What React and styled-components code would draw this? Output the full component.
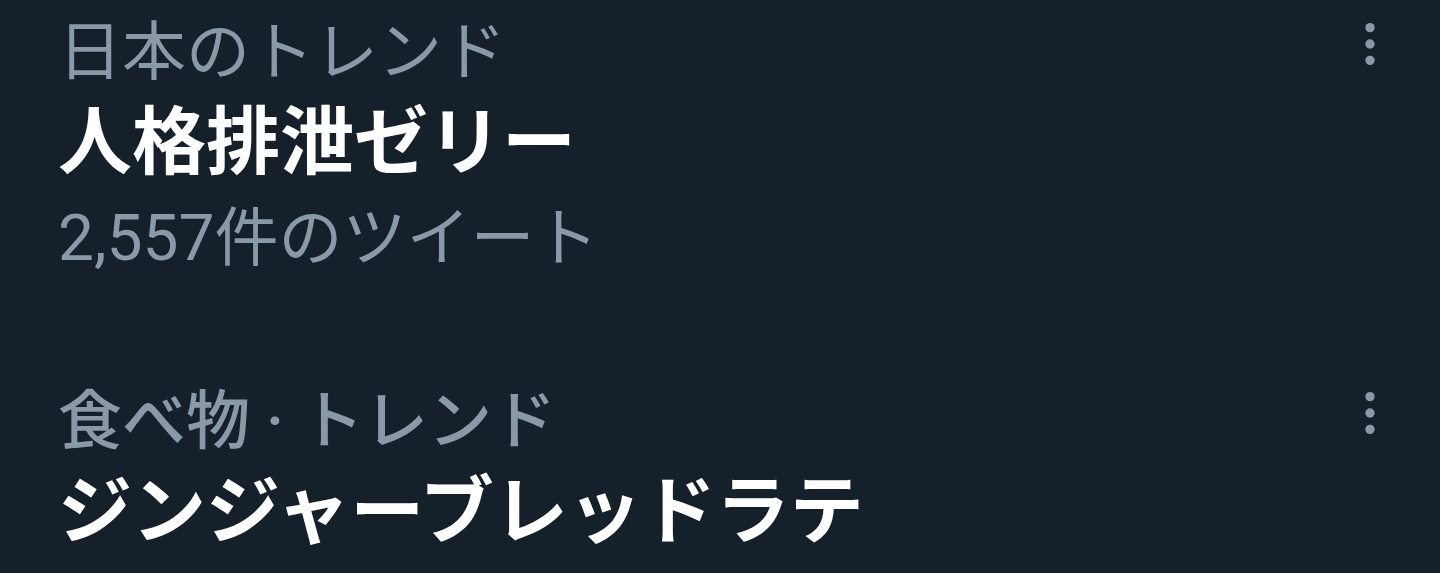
import React from 'react';
import styled, { createGlobalStyle } from 'styled-components';

const GlobalStyle = createGlobalStyle`
  html, body {
    margin: 0;
    padding: 0;
    background: #15202b;
  }
  body {
    font-family: Roboto, "Noto Sans CJK JP", sans-serif;
    -webkit-font-smoothing: antialiased;
  }
`;

const TrendList = styled.section`
  display: flex;
  flex-direction: column;
  gap: 87px;
  padding: 1px 42px 0 58px;
  height: 573px;
  box-sizing: border-box;
  overflow: hidden;
  background: #15202b;
`;

const TrendItem = styled.article`
  display: flex;
  flex-direction: column;
`;

const Category = styled.div`
  display: flex;
  align-items: center;
  justify-content: space-between;
  height: 90px;
  font-size: 64px;
  font-weight: ${(p) => (p.$topical ? 500 : 400)};
  color: #8b98a5;
  white-space: nowrap;
`;

const Title = styled.div`
  line-height: 104px;
  font-size: 74px;
  font-weight: 700;
  color: #ffffff;
  white-space: nowrap;
`;

const Count = styled.div`
  line-height: 88px;
  font-size: 64px;
  color: #8b98a5;
  white-space: nowrap;
`;

const MoreButton = styled.button`
  display: flex;
  align-items: center;
  justify-content: center;
  width: 56px;
  height: 56px;
  margin-top: -4px;
  padding: 0;
  border: none;
  background: transparent;
  color: #8b98a5;
  cursor: pointer;
`;

const MoreIcon = () => (
  <svg width="56" height="56" viewBox="0 0 24 24" fill="currentColor" aria-hidden="true">
    <circle cx="12" cy="5" r="2" />
    <circle cx="12" cy="12" r="2" />
    <circle cx="12" cy="19" r="2" />
  </svg>
);

const trends = [
  { topic: null, label: '日本のトレンド', name: '人格排泄ゼリー', tweets: '2,557件のツイート' },
  { topic: '食べ物', label: 'トレンド', name: 'ジンジャーブレッドラテ', tweets: null },
];

const App = () => {
  return (
    <>
      <GlobalStyle />
      <TrendList>
        {trends.map((t) => (
          <TrendItem key={t.name}>
            <Category $topical={!!t.topic}>
              <span>{t.topic ? `${t.topic} · ${t.label}` : t.label}</span>
              <MoreButton aria-label="その他">
                <MoreIcon />
              </MoreButton>
            </Category>
            <Title>{t.name}</Title>
            {t.tweets && <Count>{t.tweets}</Count>}
          </TrendItem>
        ))}
      </TrendList>
    </>
  );
};

export default App;
